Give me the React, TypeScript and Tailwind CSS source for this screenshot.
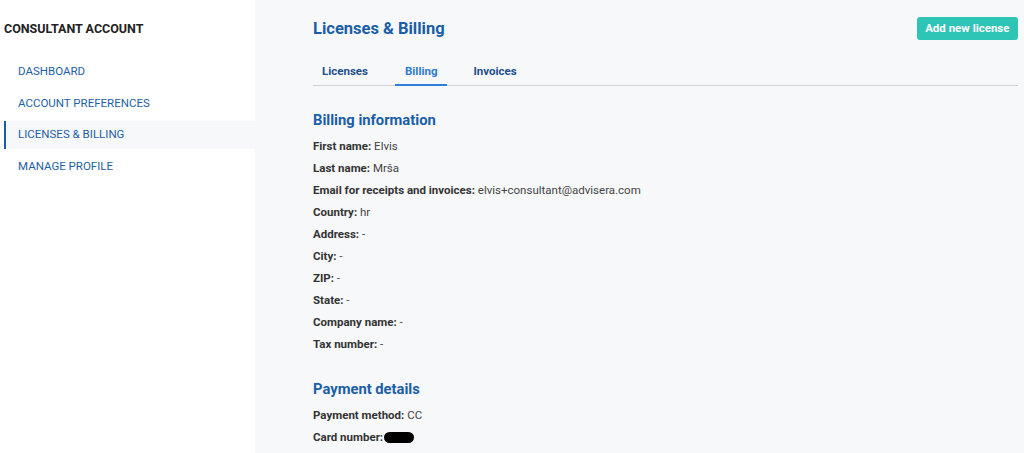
export default function App() {
  const navItems = ['DASHBOARD', 'ACCOUNT PREFERENCES', 'LICENSES & BILLING', 'MANAGE PROFILE'];
  const billing: [string, string][] = [
    ['First name:', 'Elvis'],
    ['Last name:', 'Mrša'],
    ['Email for receipts and invoices:', 'elvis+consultant@advisera.com'],
    ['Country:', 'hr'],
    ['Address:', '-'],
    ['City:', '-'],
    ['ZIP:', '-'],
    ['State:', '-'],
    ['Company name:', '-'],
    ['Tax number:', '-'],
  ];

  return (
    <div className="flex h-[453px] w-[1024px] overflow-hidden bg-[#f7f8fa] font-['Roboto',sans-serif]">
      {/* Sidebar */}
      <aside className="w-[255px] shrink-0 bg-white">
        <h2 className="pl-[4px] pt-[21px] text-[12.5px] font-bold leading-[16px] text-[#222]">
          CONSULTANT ACCOUNT
        </h2>
        <nav className="mt-[21px] pl-[4px]">
          {navItems.map((item) => {
            const active = item === 'LICENSES & BILLING';
            return (
              <div
                key={item}
                className={
                  active
                    ? 'mb-[3.5px] flex h-[28px] items-center border-l-2 border-[#1b5ea8] bg-[#f7f8fa] pl-[12px] text-[11.5px] text-[#1e5fa6]'
                    : 'mb-[3.5px] flex h-[28px] items-center border-l-2 border-transparent pl-[12px] text-[11.5px] text-[#1e5fa6]'
                }
              >
                {item}
              </div>
            );
          })}
        </nav>
      </aside>

      {/* Main */}
      <main className="flex-1 pl-[58px] pr-[6px]">
        <div className="flex items-center justify-between pt-[17px]">
          <h1 className="text-[16.5px] font-bold leading-[22px] text-[#1b5ea8]">Licenses &amp; Billing</h1>
          <button className="h-[23px] rounded-[3px] bg-[#2ec4b6] px-[8.5px] text-[11.5px] font-bold text-white">
            Add new license
          </button>
        </div>

        {/* Tabs */}
        <div className="mt-[23px] flex border-b border-[#cfd2d6] text-[11.5px] font-bold">
          <div className="px-[9px] pb-[5px] text-[#1e4f8a]">Licenses</div>
          <div className="-mb-px ml-[18px] border-b-2 border-[#2f80d8] px-[10px] pb-[4px] text-[#2f7bd0]">Billing</div>
          <div className="ml-[16px] px-[10px] pb-[5px] text-[#1e4f8a]">Invoices</div>
        </div>

        {/* Billing information */}
        <h3 className="mt-[24px] text-[14.75px] font-bold leading-[20px] text-[#1b5ea8]">Billing information</h3>
        <div className="mt-[5px] text-[11.5px] leading-[22px]">
          {billing.map(([label, value]) => (
            <div key={label}>
              <span className="font-bold text-[#333]">{label}</span>{' '}
              <span className="text-[#444]">{value}</span>
            </div>
          ))}
        </div>

        {/* Payment details */}
        <h3 className="mt-[24px] text-[14.75px] font-bold leading-[20px] text-[#1b5ea8]">Payment details</h3>
        <div className="mt-[5px] text-[11.5px] leading-[22px]">
          <div>
            <span className="font-bold text-[#333]">Payment method:</span>{' '}
            <span className="text-[#444]">CC</span>
          </div>
          <div className="flex items-center">
            <span className="font-bold text-[#333]">Card number:</span>
            <span className="ml-[1px] inline-block h-[11px] w-[30px] rounded-full bg-black" />
          </div>
        </div>
      </main>
    </div>
  );
}
